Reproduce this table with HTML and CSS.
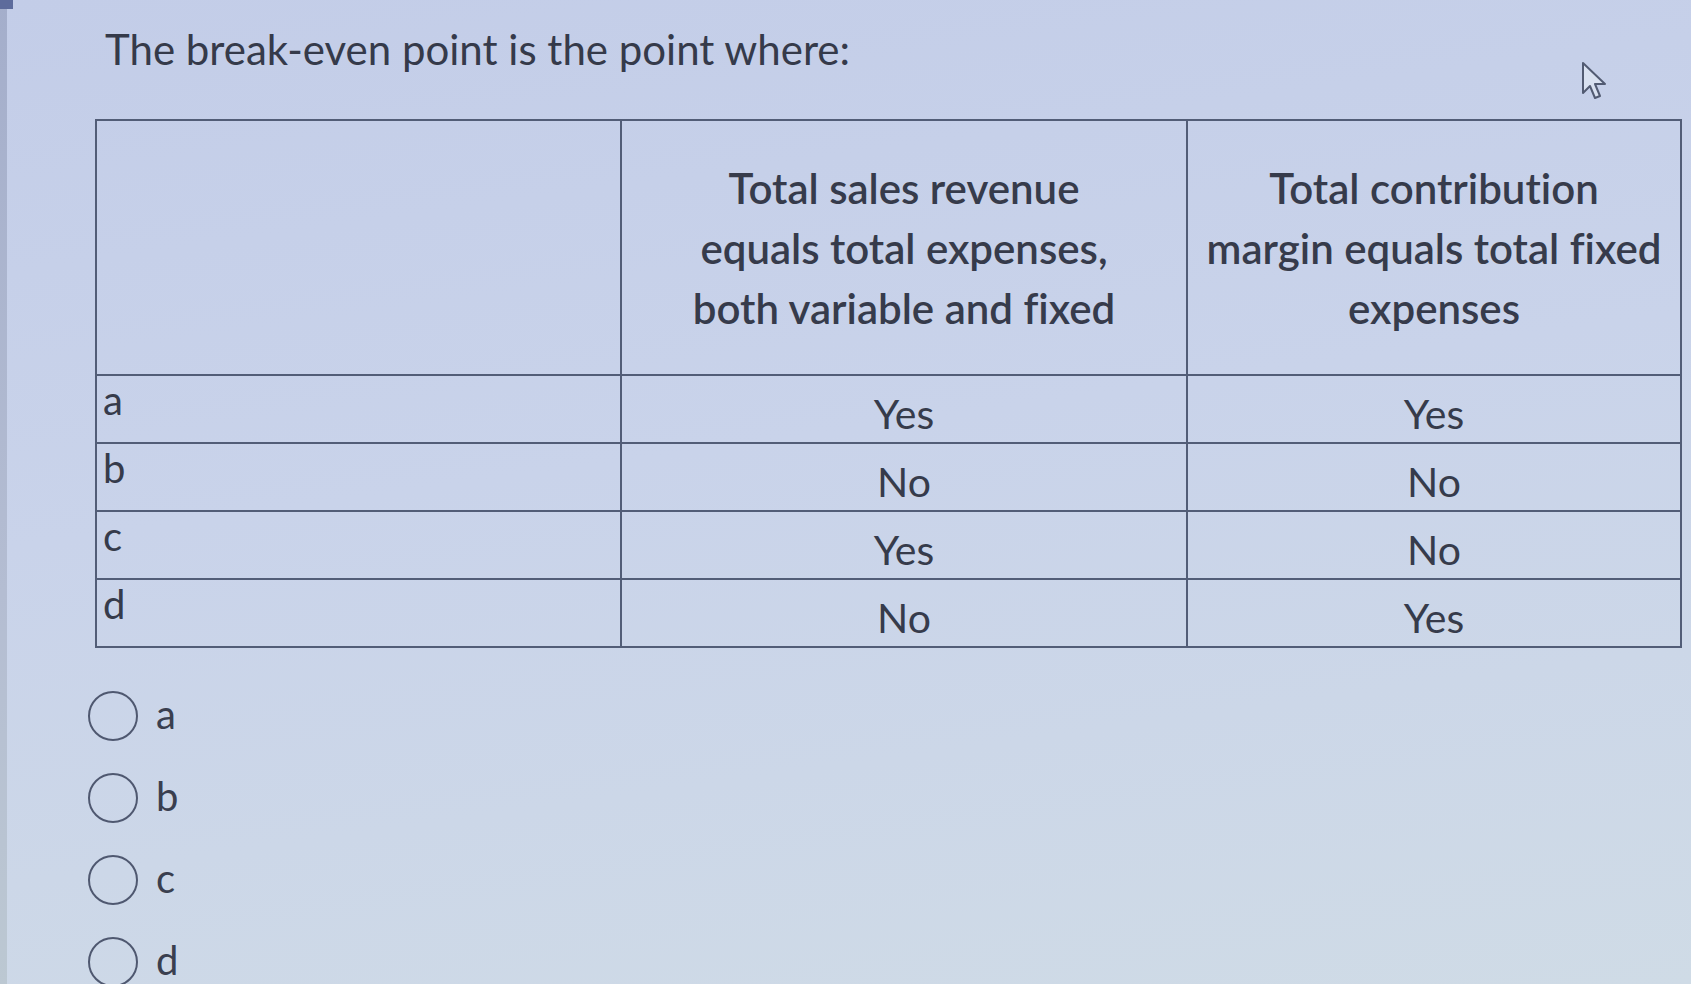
FILE: index.html
```html
<!DOCTYPE html>
<html lang="en">
<head>
<meta charset="utf-8">
<title>Break-even point question</title>
<link rel="stylesheet" href="styles.css">
</head>
<body>
<div class="screen">
  <div class="edge"></div>
  <main class="question">
    <p class="prompt">The break-even point is the point where:</p>
    <table class="grid">
      <colgroup>
        <col class="col-label">
        <col class="col-sales">
        <col class="col-margin">
      </colgroup>
      <thead>
        <tr>
          <th></th>
          <th>Total sales revenue<br>equals total expenses,<br>both variable and fixed</th>
          <th>Total contribution<br>margin equals total fixed<br>expenses</th>
        </tr>
      </thead>
      <tbody>
        <tr><td class="label">a</td><td class="value">Yes</td><td class="value">Yes</td></tr>
        <tr><td class="label">b</td><td class="value">No</td><td class="value">No</td></tr>
        <tr><td class="label">c</td><td class="value">Yes</td><td class="value">No</td></tr>
        <tr><td class="label">d</td><td class="value">No</td><td class="value">Yes</td></tr>
      </tbody>
    </table>
    <ul class="options">
      <li class="option"><span class="radio"></span><span class="option-text">a</span></li>
      <li class="option"><span class="radio"></span><span class="option-text">b</span></li>
      <li class="option"><span class="radio"></span><span class="option-text">c</span></li>
      <li class="option"><span class="radio"></span><span class="option-text">d</span></li>
    </ul>
  </main>
  <svg class="cursor" width="30" height="42" viewBox="0 0 30 42" aria-hidden="true">
    <path d="M3 3 L3 33 L10 26 L15 38 L20 36 L15 24 L25 24 Z" fill="#d9e1f0" stroke="#525b72" stroke-width="2" stroke-linejoin="round"/>
  </svg>
</div>
</body>
</html>
```
FILE: styles.css
```css
html, body {
  margin: 0;
  padding: 0;
}

body {
  width: 1691px;
  height: 984px;
  overflow: hidden;
  font-family: "Lato", "Open Sans", sans-serif;
  font-variant-ligatures: none;
  color: #363b4b;
  background: linear-gradient(172deg, #c3cde8 0%, #c9d3ea 45%, #cfdbe6 100%);
}

.screen {
  position: relative;
  display: flex;
  min-height: 984px;
}

.edge {
  position: relative;
  width: 7px;
  flex: none;
  background: linear-gradient(180deg, #a4aecb 0%, #b4bdd2 60%, #bcc8d2 100%);
}

.edge::before {
  content: "";
  position: absolute;
  top: 0;
  left: 0;
  width: 13px;
  height: 9px;
  background: #5d6b9c;
}

.question {
  flex: 1;
  padding: 24px 0 0 81px;
}

.prompt {
  margin: 0 0 45px 17px;
  font-size: 42px;
  line-height: 1.2;
  color: #353a4a;
}

.grid {
  margin-left: 7px;
  width: 1585px;
  table-layout: fixed;
  border-collapse: collapse;
}

.col-label { width: 525px; }
.col-sales { width: 566px; }
.col-margin { width: 494px; }

.grid th,
.grid td {
  border: 2px solid #525d77;
  padding: 0;
}

.grid thead tr {
  height: 255px;
}

.grid th {
  font-size: 42px;
  font-weight: 600;
  line-height: 60px;
  text-align: center;
  vertical-align: middle;
  color: #363b4b;
  white-space: nowrap;
}

.grid tbody tr {
  height: 68px;
}

.grid td.label {
  vertical-align: top;
  text-align: left;
  padding: 4px 6px 0;
  font-size: 40px;
  line-height: 1;
}

.grid td.value {
  text-align: center;
  vertical-align: middle;
  font-size: 41px;
  line-height: 1;
  padding-top: 8px;
}

.options {
  list-style: none;
  margin: 43px 0 0;
  padding: 0;
  display: flex;
  flex-direction: column;
  gap: 32px;
}

.option {
  display: flex;
  align-items: center;
  gap: 18px;
  height: 50px;
}

.radio {
  width: 50px;
  height: 50px;
  box-sizing: border-box;
  border: 2px solid #4f5870;
  border-radius: 50%;
  flex: none;
}

.option-text {
  font-size: 40px;
  line-height: 1;
  color: #3a3f4f;
  padding-bottom: 4px;
}

.cursor {
  position: absolute;
  left: 1580px;
  top: 60px;
}
```
